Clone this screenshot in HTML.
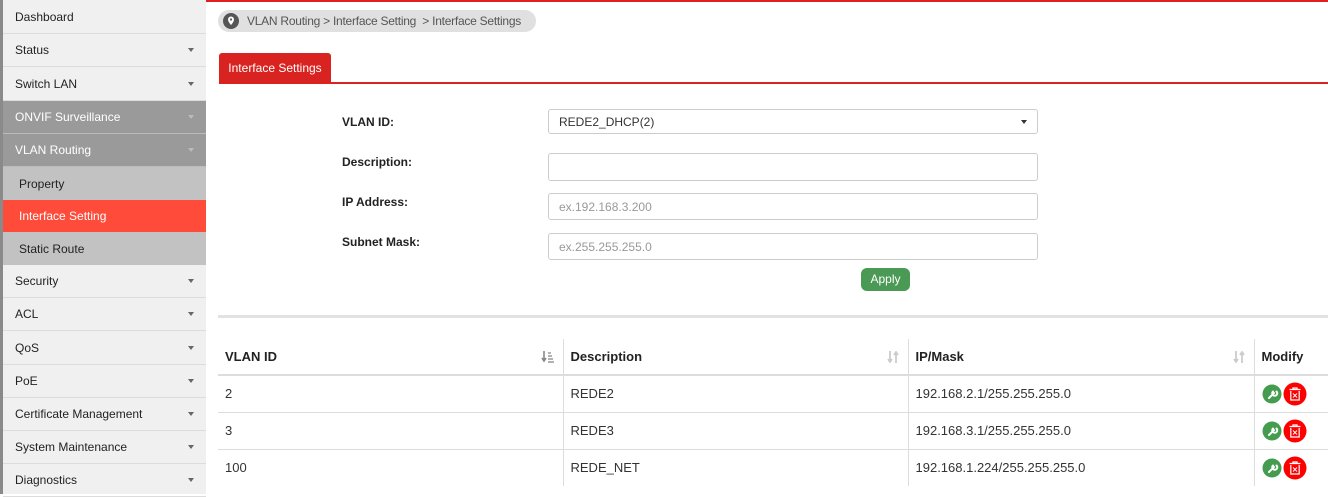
<!DOCTYPE html>
<html><head><style>
*{box-sizing:border-box;margin:0;padding:0}
body{width:1328px;height:494px;overflow:hidden;background:#fff;font-family:"Liberation Sans",Arial,sans-serif;font-size:12px;color:#333;position:relative}
#sb{position:absolute;left:0;top:0;width:206px;height:494px;background:#f0f0f0}
#sb .strip{position:absolute;left:0;top:0;width:3px;height:494px;background:#8a8a8a}
.it{position:absolute;left:3px;width:203px;border-bottom:1px solid #dcdcdc;padding-left:12px;display:flex;align-items:center;color:#222}
.it .car{position:absolute;right:12px;top:50%;margin-top:-2px;border-left:3.5px solid transparent;border-right:3.5px solid transparent;border-top:4px solid #666}
.g{background:#9a9a9a;color:#fff;border-bottom:1px solid #bbb}
.g .car{border-top-color:#bbb}
.s{background:#c2c2c2;padding-left:16px;border-bottom:none}
.a{background:#ff4b3a;color:#fff;padding-left:16px;border-bottom:none}
#top{position:absolute;left:206px;top:0;right:0;height:2px;background:#e02020}
#bc{position:absolute;left:218px;top:10px;width:318px;height:22px;background:#e0e0e0;border-radius:11px;color:#555;font-size:12px;line-height:22px;padding-left:29px;letter-spacing:-0.25px;white-space:nowrap}
#bc .pin{position:absolute;left:5px;top:3px;width:16px;height:16px;border-radius:50%;background:#555}
#tab{position:absolute;left:219px;top:53px;width:112px;height:30px;background:#d92320;color:#fff;border-radius:3px 3px 0 0;font-size:12px;line-height:30px;text-align:center}
#tabline{position:absolute;left:219px;top:82px;right:0;height:2px;background:#d92320}
.lb{position:absolute;left:342px;font-weight:bold;font-size:12px;color:#222}
.in{position:absolute;left:548px;width:490px;border:1px solid #ccc;border-radius:3px;background:#fff;padding-left:10px;font-size:12px;display:flex;align-items:center}
.ph{color:#999}
#apply{position:absolute;left:861px;top:268px;width:49px;height:23px;background:#4a9a55;border-radius:6px;color:#fff;text-align:center;line-height:23px;font-size:12px}
#div{position:absolute;left:218px;top:315px;right:0;height:3px;background:#e2e2e2}
table{position:absolute;left:218px;top:339px;width:1110px;border-collapse:collapse;font-size:13px}
th{height:36px;text-align:left;padding-left:7px;font-weight:bold;color:#222;border-left:1px solid #ddd;border-bottom:2px solid #ddd;position:relative}
th:first-child{border-left:none}
td{height:37px;padding-left:7px;border-left:1px solid #ddd;border-bottom:1px solid #ddd;color:#333}
td:first-child{border-left:none}
tr:last-child td{border-bottom:none}
.sort{position:absolute;right:8px;top:12px}
svg.ic{vertical-align:middle}
</style></head><body>
<div id="sb"><div class="strip"></div>
<div class="it" style="top:0;height:34px">Dashboard</div>
<div class="it" style="top:34px;height:33px">Status<span class="car"></span></div>
<div class="it" style="top:67px;height:34px">Switch LAN<span class="car"></span></div>
<div class="it g" style="top:101px;height:33px">ONVIF Surveillance<span class="car"></span></div>
<div class="it g" style="top:134px;height:33px">VLAN Routing<span class="car"></span></div>
<div class="it s" style="top:167px;height:33px">Property</div>
<div class="it a" style="top:200px;height:32px">Interface Setting</div>
<div class="it s" style="top:232px;height:33px">Static Route</div>
<div class="it" style="top:265px;height:33px">Security<span class="car"></span></div>
<div class="it" style="top:298px;height:33px">ACL<span class="car"></span></div>
<div class="it" style="top:331px;height:34px">QoS<span class="car"></span></div>
<div class="it" style="top:365px;height:33px">PoE<span class="car"></span></div>
<div class="it" style="top:398px;height:33px">Certificate Management<span class="car"></span></div>
<div class="it" style="top:431px;height:33px">System Maintenance<span class="car"></span></div>
<div class="it" style="top:464px;height:33px">Diagnostics<span class="car"></span></div>
</div>
<div id="top"></div>
<div id="bc"><span class="pin"><svg width="16" height="16" viewBox="0 0 16 16"><path d="M8 3.5a3 3 0 0 0-3 3c0 2.2 3 5.5 3 5.5s3-3.3 3-5.5a3 3 0 0 0-3-3z" fill="#fff"/><circle cx="8" cy="6.5" r="1.1" fill="#555"/></svg></span>VLAN Routing &gt; Interface Setting &nbsp;&gt; Interface Settings</div>
<div id="tab">Interface Settings</div><div id="tabline"></div>
<div class="lb" style="top:115px">VLAN ID:</div>
<div class="lb" style="top:155px">Description:</div>
<div class="lb" style="top:195px">IP Address:</div>
<div class="lb" style="top:235px">Subnet Mask:</div>
<div class="in" style="top:109px;height:25px">REDE2_DHCP(2)<span style="position:absolute;right:10px;top:10px;border-left:3.5px solid transparent;border-right:3.5px solid transparent;border-top:4px solid #333"></span></div>
<div class="in" style="top:153px;height:28px"></div>
<div class="in ph" style="top:193px;height:27px">ex.192.168.3.200</div>
<div class="in ph" style="top:233px;height:27px">ex.255.255.255.0</div>
<div id="apply">Apply</div>
<div id="div"></div>
<table>
<tr><th style="width:345px">VLAN ID<svg class="sort" width="14" height="12" viewBox="0 0 14 12"><path d="M3 0v9M1 7l2 3 2-3" stroke="#888" stroke-width="1.6" fill="none"/><path d="M7 2h3M7 5h4M7 8h5M7 11h6" stroke="#999" stroke-width="1.4"/></svg></th><th style="width:345px">Description<svg class="sort" width="14" height="12" viewBox="0 0 14 12"><path d="M4 0v11M2 8l2 3 2-3M10 12V1M8 4l2-3 2 3" stroke="#ccc" stroke-width="1.8" fill="none"/></svg></th><th style="width:346px">IP/Mask<svg class="sort" width="14" height="12" viewBox="0 0 14 12"><path d="M4 0v11M2 8l2 3 2-3M10 12V1M8 4l2-3 2 3" stroke="#ccc" stroke-width="1.8" fill="none"/></svg></th><th>Modify</th></tr>
<tr><td>2</td><td>REDE2</td><td>192.168.2.1/255.255.255.0</td><td><svg class="ic" width="46" height="24" viewBox="0 0 46 24"><circle cx="10" cy="12" r="9.5" fill="#449c4f"/><path d="M7 16l5-5M11 9.5a2.5 2.5 0 1 0 3.5 0" stroke="#fff" stroke-width="2" fill="none" stroke-linecap="round"/><circle cx="33" cy="12" r="11.5" fill="#f00"/><path d="M27.5 7.5h11M31 7.5v-1.5h4v1.5M28.8 9v9h8.4V9" stroke="#fff" stroke-width="1.2" fill="none"/><path d="M31 11.5l4 4M35 11.5l-4 4" stroke="#fff" stroke-width="1"/></svg></td></tr>
<tr><td>3</td><td>REDE3</td><td>192.168.3.1/255.255.255.0</td><td><svg class="ic" width="46" height="24" viewBox="0 0 46 24"><circle cx="10" cy="12" r="9.5" fill="#449c4f"/><path d="M7 16l5-5M11 9.5a2.5 2.5 0 1 0 3.5 0" stroke="#fff" stroke-width="2" fill="none" stroke-linecap="round"/><circle cx="33" cy="12" r="11.5" fill="#f00"/><path d="M27.5 7.5h11M31 7.5v-1.5h4v1.5M28.8 9v9h8.4V9" stroke="#fff" stroke-width="1.2" fill="none"/><path d="M31 11.5l4 4M35 11.5l-4 4" stroke="#fff" stroke-width="1"/></svg></td></tr>
<tr><td>100</td><td>REDE_NET</td><td>192.168.1.224/255.255.255.0</td><td><svg class="ic" width="46" height="24" viewBox="0 0 46 24"><circle cx="10" cy="12" r="9.5" fill="#449c4f"/><path d="M7 16l5-5M11 9.5a2.5 2.5 0 1 0 3.5 0" stroke="#fff" stroke-width="2" fill="none" stroke-linecap="round"/><circle cx="33" cy="12" r="11.5" fill="#f00"/><path d="M27.5 7.5h11M31 7.5v-1.5h4v1.5M28.8 9v9h8.4V9" stroke="#fff" stroke-width="1.2" fill="none"/><path d="M31 11.5l4 4M35 11.5l-4 4" stroke="#fff" stroke-width="1"/></svg></td></tr>
</table>
</body></html>
